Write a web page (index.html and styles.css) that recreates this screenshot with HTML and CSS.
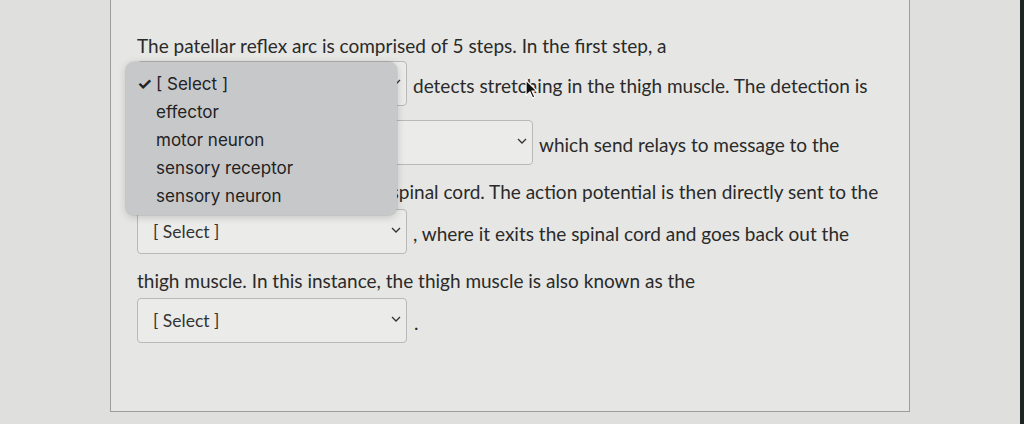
FILE: index.html
```html
<!DOCTYPE html>
<html lang="en">
<head>
    <meta charset="UTF-8">
    <title>Quiz Question</title>
    <link rel="stylesheet" href="styles.css">
</head>
<body>
    <div class="screen">
        <div class="panel">
            <div class="row text">The patellar reflex arc is comprised of 5 steps. In the first step, a</div>
            <div class="row sel-row first">
                <div class="select narrow"><span>[ Select ]</span>
                    <svg class="chev" width="10" height="6" viewBox="0 0 10 6"><path d="M1 1l4 4 4-4" fill="none" stroke="#333" stroke-width="1.3"/></svg>
                </div>
                <span>detects stretching in the thigh muscle. The detection is</span>
            </div>
            <div class="row sel-row">
                <div class="select wide"><span>[ Select ]</span>
                    <svg class="chev" width="10" height="6" viewBox="0 0 10 6"><path d="M1 1l4 4 4-4" fill="none" stroke="#333" stroke-width="1.3"/></svg>
                </div>
                <span>which send relays to message to the</span>
            </div>
            <div class="row text after-sel">interneurons found within the spinal cord. The action potential is then directly sent to the</div>
            <div class="row sel-row tight">
                <div class="select narrow"><span>[ Select ]</span>
                    <svg class="chev" width="10" height="6" viewBox="0 0 10 6"><path d="M1 1l4 4 4-4" fill="none" stroke="#333" stroke-width="1.3"/></svg>
                </div>
                <span>, where it exits the spinal cord and goes back out the</span>
            </div>
            <div class="row text after-sel">thigh muscle. In this instance, the thigh muscle is also known as the</div>
            <div class="row sel-row tight">
                <div class="select narrow"><span>[ Select ]</span>
                    <svg class="chev" width="10" height="6" viewBox="0 0 10 6"><path d="M1 1l4 4 4-4" fill="none" stroke="#333" stroke-width="1.3"/></svg>
                </div>
                <span class="dot">.</span>
            </div>
        </div>

        <!-- native dropdown open over the first select -->
        <ul class="menu">
            <li class="checked"><span class="check">✓</span>[ Select ]</li>
            <li>effector</li>
            <li>motor neuron</li>
            <li>sensory receptor</li>
            <li>sensory neuron</li>
        </ul>

        <svg class="cursor" width="13" height="20" viewBox="0 0 12 18">
            <path d="M1 1v14l3.5-3.3 2.6 5.6 2-.9-2.6-5.5H11z" fill="#111" stroke="#fff" stroke-width="1"/>
        </svg>
    </div>
    <div class="edge"></div>
</body>
</html>
```

FILE: styles.css
```css
body {
    margin: 0;
    background: #dfdfdd;
    font-family: Lato, "Open Sans", sans-serif;
    color: #2a2a2a;
    overflow: hidden;
}

.screen {
    position: relative;
    width: 1020px;
    height: 424px;
    padding-left: 110px;
    box-sizing: border-box;
}

.edge {
    position: absolute;
    top: 0;
    right: 0;
    width: 4px;
    height: 424px;
    background: #1d2424;
}

.panel {
    width: 800px;
    height: 412px;
    box-sizing: border-box;
    border: 1px solid #9c9c9c;
    border-top: none;
    background: #e6e6e4;
    padding: 33px 0 0 26px;
}

.row {
    display: flex;
    align-items: center;
    gap: 6px;
    font-size: 19px;
    white-space: nowrap;
}

.row.text {
    height: 26px;
    line-height: 26px;
}

.row.after-sel {
    margin-top: 14px;
}

.sel-row {
    height: 45px;
    margin-top: 14px;
}

.sel-row.first {
    margin-top: 2px;
}

.sel-row.tight {
    margin-top: 4px;
}

.sel-row > span {
    padding-top: 4px;
}

.select {
    height: 45px;
    box-sizing: border-box;
    border: 1px solid #b9b9b9;
    border-radius: 4px;
    background: #ebebe9;
    display: flex;
    align-items: center;
    justify-content: space-between;
    padding: 0 5px 0 15px;
    font-size: 17.5px;
    color: #333;
}

.select.narrow {
    width: 270px;
}

.select.wide {
    width: 396px;
}

.chev {
    margin-top: -4px;
}

.dot {
    margin-left: 1px;
}

.menu {
    position: absolute;
    left: 126px;
    top: 62px;
    width: 271px;
    height: 153px;
    box-sizing: border-box;
    margin: 0;
    padding: 8px 0 0 30px;
    list-style: none;
    background: #c7c8ca;
    border-radius: 8px;
    box-shadow: 0 2px 8px rgba(0, 0, 0, 0.18), 0 0 0 1px rgba(0, 0, 0, 0.06);
    font-family: Inter, "Liberation Sans", sans-serif;
    font-size: 17px;
    color: #222;
}

.menu li {
    height: 28px;
    line-height: 28px;
    position: relative;
}

.check {
    position: absolute;
    left: -19px;
    font-size: 17px;
    font-weight: 700;
}

.cursor {
    position: absolute;
    left: 525px;
    top: 79px;
}
```
